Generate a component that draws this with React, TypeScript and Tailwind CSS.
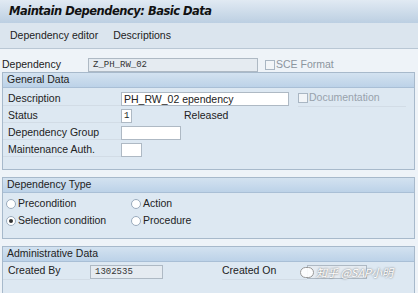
import React from "react"

const font = { fontFamily: "'Liberation Sans', Arial, sans-serif" }

function Radio({ checked }: { checked?: boolean }) {
  return (
    <span className="w-[10px] h-[10px] rounded-full border border-[#9aabbd] bg-white flex items-center justify-center mr-[2px]">
      {checked && <span className="w-[4px] h-[4px] rounded-full bg-[#333]" />}
    </span>
  )
}

function Check() {
  return <span className="w-[10px] h-[10px] border border-[#a9b6c3] bg-[#f2f5f8] inline-block" />
}

function GroupHeader({ title }: { title: string }) {
  return (
    <div className="h-[15px] bg-gradient-to-b from-[#d3e2f0] to-[#bcd2e8] border-b border-[#a9bfd6] flex items-center pl-[4px] text-[10.5px] text-[#222]">
      {title}
    </div>
  )
}

function Row({ label, children }: { label: string; children?: React.ReactNode }) {
  return (
    <div className="h-[17px] flex items-center">
      <div className="w-[118px] shrink-0 pl-[5px] text-[10.5px] text-[#222] border-b border-[#d2dce6] h-[14px] leading-[13px]">{label}</div>
      {children}
    </div>
  )
}

export default function App() {
  return (
    <div className="w-[418px] h-[293px] overflow-hidden bg-[#eaf0f6] relative" style={font}>
      {/* title bar */}
      <div className="h-[23px] bg-gradient-to-b from-[#e1eaf3] to-[#bccfe2] flex items-center pl-[9px]">
        <span className="text-[11.5px] font-bold italic text-[#111] tracking-[-0.5px]" style={{ fontFamily: "'DejaVu Sans', sans-serif" }}>
          Maintain Dependency: Basic Data
        </span>
      </div>
      {/* toolbar */}
      <div className="h-[26px] bg-[#dbe5ee] border-b border-[#b9c7d4] flex items-center pl-[10px] gap-[15px] text-[10.5px] text-[#222]">
        <span>Dependency editor</span>
        <span>Descriptions</span>
      </div>

      <div className="bg-[#eef3f8] pt-[8px] h-[268px]">
        {/* dependency row */}
        <div className="h-[15px] flex items-center">
          <div className="w-[88px] pl-[2px] text-[10.5px] text-[#222]">Dependency</div>
          <div className="w-[170px] h-[14px] border border-[#aeb9c4] bg-[#e5ebf1] text-[9px] pl-[4px] leading-[12px] text-[#333]" style={{ fontFamily: "'Liberation Mono', monospace" }}>
            Z_PH_RW_02
          </div>
          <div className="ml-[7px] flex items-center gap-[1px] text-[10.5px] text-[#8c959e]">
            <Check />
            SCE Format
          </div>
        </div>

        {/* General Data */}
        <div className="ml-[2px] mr-[3px] border border-[#a7b9cb] bg-[#dde8f2]">
          <GroupHeader title="General Data" />
          <div className="pt-[2px] pb-[11px]">
            <Row label="Description">
              <div className="w-[168px] h-[14px] border border-[#aeb9c4] bg-white text-[10.5px] pl-[2px] leading-[12px] text-[#222]">
                PH_RW_02 ependency
              </div>
              <div className="ml-[9px] flex items-center gap-[1px] text-[10.5px] text-[#98a2ac] border-b border-[#d2dce6] w-[108px]">
                <Check />
                Documentation
              </div>
            </Row>
            <Row label="Status">
              <div className="w-[11px] h-[14px] border border-[#aeb9c4] bg-white text-[9px] pl-[2px] leading-[12px] text-[#222]" style={{ fontFamily: "'Liberation Mono', monospace" }}>1</div>
              <div className="ml-[52px] text-[10.5px] text-[#222]">Released</div>
            </Row>
            <Row label="Dependency Group">
              <div className="w-[60px] h-[14px] border border-[#aeb9c4] bg-white" />
            </Row>
            <Row label="Maintenance Auth.">
              <div className="w-[21px] h-[14px] border border-[#aeb9c4] bg-white" />
            </Row>
          </div>
        </div>

        {/* Dependency Type */}
        <div className="ml-[2px] mr-[3px] mt-[7px] border border-[#a7b9cb] bg-[#dde8f2]">
          <GroupHeader title="Dependency Type" />
          <div className="pt-[2px] pb-[9px] text-[10.5px] text-[#222]">
            <div className="h-[17px] flex items-center">
              <div className="w-[128px] pl-[3px] flex items-center"><Radio />Precondition</div>
              <div className="flex items-center"><Radio />Action</div>
            </div>
            <div className="h-[17px] flex items-center">
              <div className="w-[128px] pl-[3px] flex items-center"><Radio checked />Selection condition</div>
              <div className="flex items-center"><Radio />Procedure</div>
            </div>
          </div>
        </div>

        {/* Administrative Data */}
        <div className="ml-[2px] mr-[3px] mt-[7px] border border-[#a7b9cb] bg-[#dde8f2] h-[60px]">
          <GroupHeader title="Administrative Data" />
          <div className="pt-[2px] h-[17px] flex items-center text-[10.5px] text-[#222]">
            <div className="w-[87px] pl-[5px] border-b border-[#d2dce6]">Created By</div>
            <div className="w-[73px] h-[14px] border border-[#aeb9c4] bg-[#e5ebf1] text-[9px] pl-[4px] leading-[12px] text-[#333]" style={{ fontFamily: "'Liberation Mono', monospace" }}>
              1302535
            </div>
            <div className="ml-[59px] w-[85px] border-b border-[#d2dce6]">Created On</div>
            <div className="w-[60px] h-[14px] border border-[#aeb9c4] bg-[#e5ebf1]" />
          </div>
        </div>
      </div>

      {/* watermark */}
      <div className="absolute left-[300px] top-[264px] flex items-center gap-[2px] text-white text-[11px] italic" style={{ fontFamily: "'Noto Sans CJK SC', sans-serif", textShadow: "0 0 2px #555" }}>
        <span className="w-[14px] h-[11px] rounded-full bg-white/90 border border-[#999]" />
        知乎 @SAP小明
      </div>
    </div>
  )
}
